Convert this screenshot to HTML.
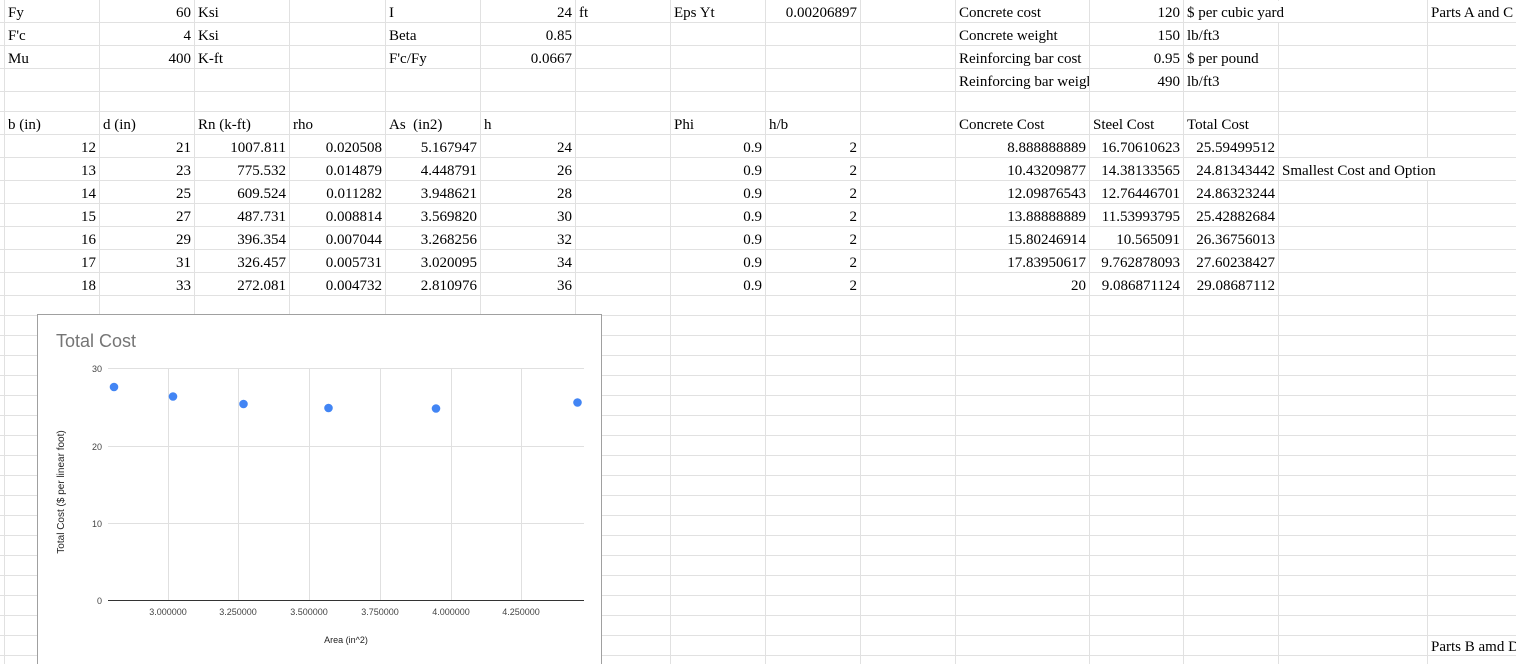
<!DOCTYPE html>
<html><head><meta charset="utf-8"><style>
html,body{margin:0;padding:0;background:#fff;width:1516px;height:664px;overflow:hidden;position:relative}
.v{position:absolute;top:0;width:1px;height:664px;background:#e1e1e1}
.h{position:absolute;left:0;width:1516px;height:1px;background:#e1e1e1}
.c{position:absolute;font-family:"Liberation Serif",serif;font-size:15px;color:#000;white-space:nowrap;overflow:visible;background:#fff;}
.c span{position:relative;top:2px}
.l{text-align:left;padding-left:3px;box-sizing:border-box}
.r{text-align:right;padding-right:3px;box-sizing:border-box}
</style></head><body>
<div class="v" style="left:4px"></div><div class="v" style="left:99px"></div><div class="v" style="left:194px"></div><div class="v" style="left:289px"></div><div class="v" style="left:385px"></div><div class="v" style="left:480px"></div><div class="v" style="left:575px"></div><div class="v" style="left:670px"></div><div class="v" style="left:765px"></div><div class="v" style="left:860px"></div><div class="v" style="left:955px"></div><div class="v" style="left:1089px"></div><div class="v" style="left:1183px"></div><div class="v" style="left:1278px"></div><div class="v" style="left:1427px"></div>
<div class="h" style="top:22px"></div><div class="h" style="top:45px"></div><div class="h" style="top:68px"></div><div class="h" style="top:91px"></div><div class="h" style="top:111px"></div><div class="h" style="top:134px"></div><div class="h" style="top:157px"></div><div class="h" style="top:180px"></div><div class="h" style="top:203px"></div><div class="h" style="top:226px"></div><div class="h" style="top:249px"></div><div class="h" style="top:272px"></div><div class="h" style="top:295px"></div><div class="h" style="top:315px"></div><div class="h" style="top:335px"></div><div class="h" style="top:355px"></div><div class="h" style="top:375px"></div><div class="h" style="top:395px"></div><div class="h" style="top:415px"></div><div class="h" style="top:435px"></div><div class="h" style="top:455px"></div><div class="h" style="top:475px"></div><div class="h" style="top:495px"></div><div class="h" style="top:515px"></div><div class="h" style="top:535px"></div><div class="h" style="top:555px"></div><div class="h" style="top:575px"></div><div class="h" style="top:595px"></div><div class="h" style="top:615px"></div><div class="h" style="top:635px"></div><div class="h" style="top:655px"></div>

<div class="c l" style="left:5px;top:1px;width:94px;height:21px;line-height:21px"><span>Fy</span></div>
<div class="c r" style="left:100px;top:1px;width:94px;height:21px;line-height:21px"><span>60</span></div>
<div class="c l" style="left:195px;top:1px;width:94px;height:21px;line-height:21px"><span>Ksi</span></div>
<div class="c l" style="left:386px;top:1px;width:94px;height:21px;line-height:21px"><span>I</span></div>
<div class="c r" style="left:481px;top:1px;width:94px;height:21px;line-height:21px"><span>24</span></div>
<div class="c l" style="left:576px;top:1px;width:94px;height:21px;line-height:21px"><span>ft</span></div>
<div class="c l" style="left:671px;top:1px;width:94px;height:21px;line-height:21px"><span>Eps Yt</span></div>
<div class="c r" style="left:766px;top:1px;width:94px;height:21px;line-height:21px"><span>0.00206897</span></div>
<div class="c l" style="left:956px;top:1px;width:133px;height:21px;line-height:21px"><span>Concrete cost</span></div>
<div class="c r" style="left:1090px;top:1px;width:93px;height:21px;line-height:21px"><span>120</span></div>
<div class="c l" style="left:1184px;top:1px;width:120px;height:21px;line-height:21px"><span>$ per cubic yard</span></div>
<div class="c l" style="left:1428px;top:1px;width:88px;height:21px;line-height:21px;overflow:hidden"><span>Parts A and C</span></div>
<div class="c l" style="left:5px;top:23px;width:94px;height:22px;line-height:22px"><span>F'c</span></div>
<div class="c r" style="left:100px;top:23px;width:94px;height:22px;line-height:22px"><span>4</span></div>
<div class="c l" style="left:195px;top:23px;width:94px;height:22px;line-height:22px"><span>Ksi</span></div>
<div class="c l" style="left:386px;top:23px;width:94px;height:22px;line-height:22px"><span>Beta</span></div>
<div class="c r" style="left:481px;top:23px;width:94px;height:22px;line-height:22px"><span>0.85</span></div>
<div class="c l" style="left:956px;top:23px;width:133px;height:22px;line-height:22px"><span>Concrete weight</span></div>
<div class="c r" style="left:1090px;top:23px;width:93px;height:22px;line-height:22px"><span>150</span></div>
<div class="c l" style="left:1184px;top:23px;width:94px;height:22px;line-height:22px"><span>lb/ft3</span></div>
<div class="c l" style="left:5px;top:46px;width:94px;height:22px;line-height:22px"><span>Mu</span></div>
<div class="c r" style="left:100px;top:46px;width:94px;height:22px;line-height:22px"><span>400</span></div>
<div class="c l" style="left:195px;top:46px;width:94px;height:22px;line-height:22px"><span>K-ft</span></div>
<div class="c l" style="left:386px;top:46px;width:94px;height:22px;line-height:22px"><span>F'c/Fy</span></div>
<div class="c r" style="left:481px;top:46px;width:94px;height:22px;line-height:22px"><span>0.0667</span></div>
<div class="c l" style="left:956px;top:46px;width:133px;height:22px;line-height:22px"><span>Reinforcing bar cost</span></div>
<div class="c r" style="left:1090px;top:46px;width:93px;height:22px;line-height:22px"><span>0.95</span></div>
<div class="c l" style="left:1184px;top:46px;width:94px;height:22px;line-height:22px"><span>$ per pound</span></div>
<div class="c l" style="left:956px;top:69px;width:133px;height:22px;line-height:22px;overflow:hidden"><span>Reinforcing bar weight</span></div>
<div class="c r" style="left:1090px;top:69px;width:93px;height:22px;line-height:22px"><span>490</span></div>
<div class="c l" style="left:1184px;top:69px;width:94px;height:22px;line-height:22px"><span>lb/ft3</span></div>
<div class="c l" style="left:5px;top:112px;width:94px;height:22px;line-height:22px"><span>b (in)</span></div>
<div class="c l" style="left:100px;top:112px;width:94px;height:22px;line-height:22px"><span>d (in)</span></div>
<div class="c l" style="left:195px;top:112px;width:94px;height:22px;line-height:22px"><span>Rn (k-ft)</span></div>
<div class="c l" style="left:290px;top:112px;width:95px;height:22px;line-height:22px"><span>rho</span></div>
<div class="c l" style="left:386px;top:112px;width:94px;height:22px;line-height:22px"><span>As &nbsp;(in2)</span></div>
<div class="c l" style="left:481px;top:112px;width:94px;height:22px;line-height:22px"><span>h</span></div>
<div class="c l" style="left:671px;top:112px;width:94px;height:22px;line-height:22px"><span>Phi</span></div>
<div class="c l" style="left:766px;top:112px;width:94px;height:22px;line-height:22px"><span>h/b</span></div>
<div class="c l" style="left:956px;top:112px;width:133px;height:22px;line-height:22px"><span>Concrete Cost</span></div>
<div class="c l" style="left:1090px;top:112px;width:93px;height:22px;line-height:22px"><span>Steel Cost</span></div>
<div class="c l" style="left:1184px;top:112px;width:94px;height:22px;line-height:22px"><span>Total Cost</span></div>

<div style="position:absolute;left:0;top:135px">
<div class="c r" style="left:5px;top:0;width:94px;height:22px;line-height:22px"><span>12</span></div><div class="c r" style="left:100px;top:0;width:94px;height:22px;line-height:22px"><span>21</span></div><div class="c r" style="left:195px;top:0;width:94px;height:22px;line-height:22px"><span>1007.811</span></div><div class="c r" style="left:290px;top:0;width:95px;height:22px;line-height:22px"><span>0.020508</span></div><div class="c r" style="left:386px;top:0;width:94px;height:22px;line-height:22px"><span>5.167947</span></div><div class="c r" style="left:481px;top:0;width:94px;height:22px;line-height:22px"><span>24</span></div><div class="c r" style="left:671px;top:0;width:94px;height:22px;line-height:22px"><span>0.9</span></div><div class="c r" style="left:766px;top:0;width:94px;height:22px;line-height:22px"><span>2</span></div><div class="c r" style="left:956px;top:0;width:133px;height:22px;line-height:22px"><span>8.888888889</span></div><div class="c r" style="left:1090px;top:0;width:93px;height:22px;line-height:22px"><span>16.70610623</span></div><div class="c r" style="left:1184px;top:0;width:94px;height:22px;line-height:22px"><span>25.59499512</span></div>
</div>
<div style="position:absolute;left:0;top:158px">
<div class="c r" style="left:5px;top:0;width:94px;height:22px;line-height:22px"><span>13</span></div><div class="c r" style="left:100px;top:0;width:94px;height:22px;line-height:22px"><span>23</span></div><div class="c r" style="left:195px;top:0;width:94px;height:22px;line-height:22px"><span>775.532</span></div><div class="c r" style="left:290px;top:0;width:95px;height:22px;line-height:22px"><span>0.014879</span></div><div class="c r" style="left:386px;top:0;width:94px;height:22px;line-height:22px"><span>4.448791</span></div><div class="c r" style="left:481px;top:0;width:94px;height:22px;line-height:22px"><span>26</span></div><div class="c r" style="left:671px;top:0;width:94px;height:22px;line-height:22px"><span>0.9</span></div><div class="c r" style="left:766px;top:0;width:94px;height:22px;line-height:22px"><span>2</span></div><div class="c r" style="left:956px;top:0;width:133px;height:22px;line-height:22px"><span>10.43209877</span></div><div class="c r" style="left:1090px;top:0;width:93px;height:22px;line-height:22px"><span>14.38133565</span></div><div class="c r" style="left:1184px;top:0;width:94px;height:22px;line-height:22px"><span>24.81343442</span></div><div class="c l" style="left:1279px;top:0;width:160px;height:22px;line-height:22px"><span>Smallest Cost and Option</span></div>
</div>
<div style="position:absolute;left:0;top:181px">
<div class="c r" style="left:5px;top:0;width:94px;height:22px;line-height:22px"><span>14</span></div><div class="c r" style="left:100px;top:0;width:94px;height:22px;line-height:22px"><span>25</span></div><div class="c r" style="left:195px;top:0;width:94px;height:22px;line-height:22px"><span>609.524</span></div><div class="c r" style="left:290px;top:0;width:95px;height:22px;line-height:22px"><span>0.011282</span></div><div class="c r" style="left:386px;top:0;width:94px;height:22px;line-height:22px"><span>3.948621</span></div><div class="c r" style="left:481px;top:0;width:94px;height:22px;line-height:22px"><span>28</span></div><div class="c r" style="left:671px;top:0;width:94px;height:22px;line-height:22px"><span>0.9</span></div><div class="c r" style="left:766px;top:0;width:94px;height:22px;line-height:22px"><span>2</span></div><div class="c r" style="left:956px;top:0;width:133px;height:22px;line-height:22px"><span>12.09876543</span></div><div class="c r" style="left:1090px;top:0;width:93px;height:22px;line-height:22px"><span>12.76446701</span></div><div class="c r" style="left:1184px;top:0;width:94px;height:22px;line-height:22px"><span>24.86323244</span></div>
</div>
<div style="position:absolute;left:0;top:204px">
<div class="c r" style="left:5px;top:0;width:94px;height:22px;line-height:22px"><span>15</span></div><div class="c r" style="left:100px;top:0;width:94px;height:22px;line-height:22px"><span>27</span></div><div class="c r" style="left:195px;top:0;width:94px;height:22px;line-height:22px"><span>487.731</span></div><div class="c r" style="left:290px;top:0;width:95px;height:22px;line-height:22px"><span>0.008814</span></div><div class="c r" style="left:386px;top:0;width:94px;height:22px;line-height:22px"><span>3.569820</span></div><div class="c r" style="left:481px;top:0;width:94px;height:22px;line-height:22px"><span>30</span></div><div class="c r" style="left:671px;top:0;width:94px;height:22px;line-height:22px"><span>0.9</span></div><div class="c r" style="left:766px;top:0;width:94px;height:22px;line-height:22px"><span>2</span></div><div class="c r" style="left:956px;top:0;width:133px;height:22px;line-height:22px"><span>13.88888889</span></div><div class="c r" style="left:1090px;top:0;width:93px;height:22px;line-height:22px"><span>11.53993795</span></div><div class="c r" style="left:1184px;top:0;width:94px;height:22px;line-height:22px"><span>25.42882684</span></div>
</div>
<div style="position:absolute;left:0;top:227px">
<div class="c r" style="left:5px;top:0;width:94px;height:22px;line-height:22px"><span>16</span></div><div class="c r" style="left:100px;top:0;width:94px;height:22px;line-height:22px"><span>29</span></div><div class="c r" style="left:195px;top:0;width:94px;height:22px;line-height:22px"><span>396.354</span></div><div class="c r" style="left:290px;top:0;width:95px;height:22px;line-height:22px"><span>0.007044</span></div><div class="c r" style="left:386px;top:0;width:94px;height:22px;line-height:22px"><span>3.268256</span></div><div class="c r" style="left:481px;top:0;width:94px;height:22px;line-height:22px"><span>32</span></div><div class="c r" style="left:671px;top:0;width:94px;height:22px;line-height:22px"><span>0.9</span></div><div class="c r" style="left:766px;top:0;width:94px;height:22px;line-height:22px"><span>2</span></div><div class="c r" style="left:956px;top:0;width:133px;height:22px;line-height:22px"><span>15.80246914</span></div><div class="c r" style="left:1090px;top:0;width:93px;height:22px;line-height:22px"><span>10.565091</span></div><div class="c r" style="left:1184px;top:0;width:94px;height:22px;line-height:22px"><span>26.36756013</span></div>
</div>
<div style="position:absolute;left:0;top:250px">
<div class="c r" style="left:5px;top:0;width:94px;height:22px;line-height:22px"><span>17</span></div><div class="c r" style="left:100px;top:0;width:94px;height:22px;line-height:22px"><span>31</span></div><div class="c r" style="left:195px;top:0;width:94px;height:22px;line-height:22px"><span>326.457</span></div><div class="c r" style="left:290px;top:0;width:95px;height:22px;line-height:22px"><span>0.005731</span></div><div class="c r" style="left:386px;top:0;width:94px;height:22px;line-height:22px"><span>3.020095</span></div><div class="c r" style="left:481px;top:0;width:94px;height:22px;line-height:22px"><span>34</span></div><div class="c r" style="left:671px;top:0;width:94px;height:22px;line-height:22px"><span>0.9</span></div><div class="c r" style="left:766px;top:0;width:94px;height:22px;line-height:22px"><span>2</span></div><div class="c r" style="left:956px;top:0;width:133px;height:22px;line-height:22px"><span>17.83950617</span></div><div class="c r" style="left:1090px;top:0;width:93px;height:22px;line-height:22px"><span>9.762878093</span></div><div class="c r" style="left:1184px;top:0;width:94px;height:22px;line-height:22px"><span>27.60238427</span></div>
</div>
<div style="position:absolute;left:0;top:273px">
<div class="c r" style="left:5px;top:0;width:94px;height:22px;line-height:22px"><span>18</span></div><div class="c r" style="left:100px;top:0;width:94px;height:22px;line-height:22px"><span>33</span></div><div class="c r" style="left:195px;top:0;width:94px;height:22px;line-height:22px"><span>272.081</span></div><div class="c r" style="left:290px;top:0;width:95px;height:22px;line-height:22px"><span>0.004732</span></div><div class="c r" style="left:386px;top:0;width:94px;height:22px;line-height:22px"><span>2.810976</span></div><div class="c r" style="left:481px;top:0;width:94px;height:22px;line-height:22px"><span>36</span></div><div class="c r" style="left:671px;top:0;width:94px;height:22px;line-height:22px"><span>0.9</span></div><div class="c r" style="left:766px;top:0;width:94px;height:22px;line-height:22px"><span>2</span></div><div class="c r" style="left:956px;top:0;width:133px;height:22px;line-height:22px"><span>20</span></div><div class="c r" style="left:1090px;top:0;width:93px;height:22px;line-height:22px"><span>9.086871124</span></div><div class="c r" style="left:1184px;top:0;width:94px;height:22px;line-height:22px"><span>29.08687112</span></div>
</div>
<div class="c l" style="left:1428px;top:636px;width:88px;height:19px;line-height:19px;overflow:hidden"><span>Parts B amd D</span></div>

<div style="position:absolute;left:37px;top:314px;width:565px;height:351px;background:#fff;border:1px solid #a0a0a0;box-sizing:border-box"></div>
<svg style="position:absolute;left:0;top:0" width="1516" height="664">
<g stroke="#e0e0e0" stroke-width="1">
<line x1="108" y1="368.5" x2="584" y2="368.5"/><line x1="108" y1="446.5" x2="584" y2="446.5"/><line x1="108" y1="523.5" x2="584" y2="523.5"/>
<line x1="168.5" y1="368" x2="168.5" y2="600"/><line x1="238.5" y1="368" x2="238.5" y2="600"/><line x1="309.5" y1="368" x2="309.5" y2="600"/><line x1="380.5" y1="368" x2="380.5" y2="600"/><line x1="451.5" y1="368" x2="451.5" y2="600"/><line x1="521.5" y1="368" x2="521.5" y2="600"/>
</g>
<line x1="108" y1="600.5" x2="584" y2="600.5" stroke="#333" stroke-width="1"/>
<g fill="#4285f4">
<circle cx="114" cy="387" r="4.3"/><circle cx="173" cy="396.5" r="4.3"/><circle cx="243.5" cy="404" r="4.3"/><circle cx="328.5" cy="408" r="4.3"/><circle cx="436" cy="408.5" r="4.3"/><circle cx="577.5" cy="402.5" r="4.3"/>
</g>
<g font-family="Liberation Sans, sans-serif" font-size="9" fill="#444">
<text x="102" y="372" text-anchor="end">30</text><text x="102" y="450" text-anchor="end">20</text><text x="102" y="527" text-anchor="end">10</text><text x="102" y="604" text-anchor="end">0</text>
<text x="168" y="615" text-anchor="middle">3.000000</text><text x="238" y="615" text-anchor="middle">3.250000</text><text x="309" y="615" text-anchor="middle">3.500000</text><text x="380" y="615" text-anchor="middle">3.750000</text><text x="451" y="615" text-anchor="middle">4.000000</text><text x="521" y="615" text-anchor="middle">4.250000</text>
<text x="346" y="643" text-anchor="middle" fill="#222">Area (in^2)</text>
<text transform="translate(64,492) rotate(-90)" text-anchor="middle" fill="#222" font-size="10">Total Cost ($ per linear foot)</text>
</g>
<text x="56" y="347" font-family="Liberation Sans, sans-serif" font-size="18" fill="#757575">Total Cost</text>
</svg>
</body></html>
